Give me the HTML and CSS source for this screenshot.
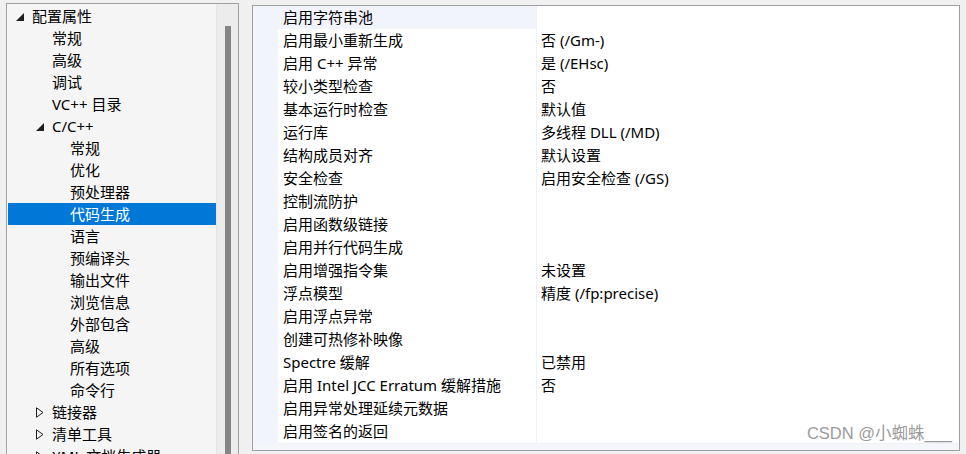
FILE: index.html
```html
<!DOCTYPE html>
<html lang="zh-CN">
<head>
<meta charset="utf-8">
<title>属性页</title>
<link rel="stylesheet" href="styles.css">
</head>
<body>
<div class="app">
  <div class="tree-panel">
    <div class="tree">
      <div class="item l0"><span class="tg"><span class="tri-open"></span></span>配置属性</div>
      <div class="item l1"><span class="tg"></span>常规</div>
      <div class="item l1"><span class="tg"></span>高级</div>
      <div class="item l1"><span class="tg"></span>调试</div>
      <div class="item l1"><span class="tg"></span>VC++ 目录</div>
      <div class="item l1"><span class="tg"><span class="tri-open"></span></span>C/C++</div>
      <div class="item l2"><span class="tg"></span>常规</div>
      <div class="item l2"><span class="tg"></span>优化</div>
      <div class="item l2"><span class="tg"></span>预处理器</div>
      <div class="item l2 sel"><span class="tg"></span>代码生成</div>
      <div class="item l2"><span class="tg"></span>语言</div>
      <div class="item l2"><span class="tg"></span>预编译头</div>
      <div class="item l2"><span class="tg"></span>输出文件</div>
      <div class="item l2"><span class="tg"></span>浏览信息</div>
      <div class="item l2"><span class="tg"></span>外部包含</div>
      <div class="item l2"><span class="tg"></span>高级</div>
      <div class="item l2"><span class="tg"></span>所有选项</div>
      <div class="item l2"><span class="tg"></span>命令行</div>
      <div class="item l1"><span class="tg"><svg class="tri-closed" width="8" height="11" viewBox="0 0 8 11"><path d="M0.5 0.8 L7 5.5 L0.5 10.2 Z" fill="none" stroke="#1e1e1e" stroke-width="1"/></svg></span>链接器</div>
      <div class="item l1"><span class="tg"><svg class="tri-closed" width="8" height="11" viewBox="0 0 8 11"><path d="M0.5 0.8 L7 5.5 L0.5 10.2 Z" fill="none" stroke="#1e1e1e" stroke-width="1"/></svg></span>清单工具</div>
      <div class="item l1"><span class="tg"><svg class="tri-closed" width="8" height="11" viewBox="0 0 8 11"><path d="M0.5 0.8 L7 5.5 L0.5 10.2 Z" fill="none" stroke="#1e1e1e" stroke-width="1"/></svg></span>XML 文档生成器</div>
    </div>
    <div class="vscroll"><div class="thumb"></div></div>
  </div>

  <div class="grid-panel">
    <div class="grid">
      <div class="row active"><div class="gut"></div><div class="name">启用字符串池</div><div class="val"></div></div>
      <div class="row"><div class="gut"></div><div class="name">启用最小重新生成</div><div class="val">否 (/Gm-)</div></div>
      <div class="row"><div class="gut"></div><div class="name">启用 C++ 异常</div><div class="val">是 (/EHsc)</div></div>
      <div class="row"><div class="gut"></div><div class="name">较小类型检查</div><div class="val">否</div></div>
      <div class="row"><div class="gut"></div><div class="name">基本运行时检查</div><div class="val">默认值</div></div>
      <div class="row"><div class="gut"></div><div class="name">运行库</div><div class="val">多线程 DLL (/MD)</div></div>
      <div class="row"><div class="gut"></div><div class="name">结构成员对齐</div><div class="val">默认设置</div></div>
      <div class="row"><div class="gut"></div><div class="name">安全检查</div><div class="val">启用安全检查 (/GS)</div></div>
      <div class="row"><div class="gut"></div><div class="name">控制流防护</div><div class="val"></div></div>
      <div class="row"><div class="gut"></div><div class="name">启用函数级链接</div><div class="val"></div></div>
      <div class="row"><div class="gut"></div><div class="name">启用并行代码生成</div><div class="val"></div></div>
      <div class="row"><div class="gut"></div><div class="name">启用增强指令集</div><div class="val">未设置</div></div>
      <div class="row"><div class="gut"></div><div class="name">浮点模型</div><div class="val">精度 (/fp:precise)</div></div>
      <div class="row"><div class="gut"></div><div class="name">启用浮点异常</div><div class="val"></div></div>
      <div class="row"><div class="gut"></div><div class="name">创建可热修补映像</div><div class="val"></div></div>
      <div class="row"><div class="gut"></div><div class="name">Spectre 缓解</div><div class="val">已禁用</div></div>
      <div class="row"><div class="gut"></div><div class="name">启用 Intel JCC Erratum 缓解措施</div><div class="val">否</div></div>
      <div class="row"><div class="gut"></div><div class="name">启用异常处理延续元数据</div><div class="val"></div></div>
      <div class="row"><div class="gut"></div><div class="name">启用签名的返回</div><div class="val"></div></div>
    </div>
    <div class="watermark">CSDN @小蜘蛛___</div>
  </div>
</div>
</body>
</html>
```

FILE: styles.css
```css
* { box-sizing: border-box; }
html, body {
  margin: 0;
  padding: 0;
  background: #f0f0f0;
  width: 966px;
  height: 454px;
  overflow: hidden;
}
body {
  font-family: "Noto Sans", "Noto Sans CJK SC", sans-serif;
  font-size: 15px;
  color: #000;
}
.app {
  display: flex;
  align-items: flex-start;
  padding: 3px 0 0 6px;
}
.tree-panel {
  width: 233px;
  height: 470px;
  border: 1px solid #a0a0a0;
  border-bottom: none;
  background: #f5f5f5;
  display: flex;
  flex-shrink: 0;
}
.tree {
  width: 209px;
  padding: 1px 0 0 1px;
}
.item {
  height: 22px;
  line-height: 22px;
  display: flex;
  align-items: center;
  white-space: nowrap;
}
.l0 { padding-left: 8px; }
.l1 { padding-left: 28px; }
.l2 { padding-left: 46px; }
.tg {
  width: 16px;
  flex-shrink: 0;
  height: 22px;
  display: flex;
  align-items: center;
}
.tri-open {
  width: 0;
  height: 0;
  border-left: 8px solid transparent;
  border-bottom: 8px solid #1e1e1e;
  margin-top: 1px;
}
.tri-closed { display: block; margin-top: 1px; }
.sel {
  background: #0078d7;
  color: #fff;
}
.vscroll {
  width: 22px;
  border-left: 1px solid #e6e6e6;
  background: #ececec;
  display: flex;
  justify-content: flex-end;
  padding: 22px 7px 0 0;
}
.thumb {
  width: 6px;
  height: 100%;
  background: #858585;
}
.grid-panel {
  position: relative;
  margin: 2px 0 0 13px;
  width: 708px;
  height: 446px;
  border: 1px solid #a0a0a0;
  background: #f4f6fa;
}
.row {
  display: grid;
  grid-template-columns: 25px 259px 1fr;
  height: 23px;
}
.gut { background: #f1f4fa; }
.name, .val {
  background: #fff;
  border-bottom: 1px solid #eef2f8;
  line-height: 23px;
  white-space: nowrap;
}
.name {
  padding-left: 5px;
  border-right: 1px solid #eef2f8;
}
.val { padding-left: 4px; }
.row.active .name { background: #f1f4fa; }
.watermark {
  position: absolute;
  right: 7px;
  bottom: 7px;
  color: #9a9a9a;
  font-family: "Liberation Sans", "Noto Sans CJK SC", sans-serif;
  font-size: 16.5px;
  line-height: 20px;
}
```
